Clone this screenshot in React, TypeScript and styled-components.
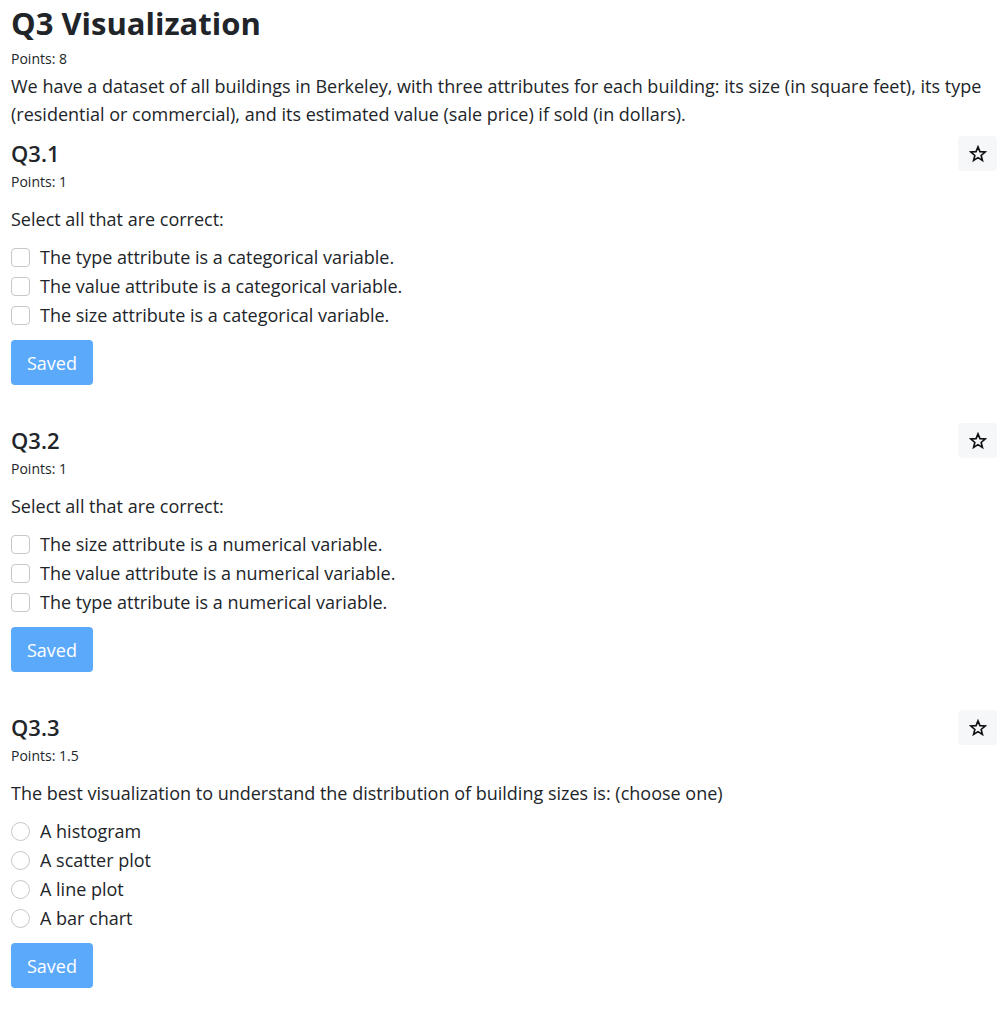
import styled, { createGlobalStyle } from 'styled-components'

const GlobalStyle = createGlobalStyle`
    body {
        margin: 0;
        background: #fff;
        color: #212529;
        font-family: "Segoe UI", "Open Sans", "Noto Sans", sans-serif;
    }
`

type Part = {
    id: string
    points: string
    prompt: string
    kind: 'checkbox' | 'radio'
    options: string[]
}

const PARTS: Part[] = [
    {
        id: 'Q3.1',
        points: '1',
        prompt: 'Select all that are correct:',
        kind: 'checkbox',
        options: [
            'The type attribute is a categorical variable.',
            'The value attribute is a categorical variable.',
            'The size attribute is a categorical variable.',
        ],
    },
    {
        id: 'Q3.2',
        points: '1',
        prompt: 'Select all that are correct:',
        kind: 'checkbox',
        options: [
            'The size attribute is a numerical variable.',
            'The value attribute is a numerical variable.',
            'The type attribute is a numerical variable.',
        ],
    },
    {
        id: 'Q3.3',
        points: '1.5',
        prompt: 'The best visualization to understand the distribution of building sizes is: (choose one)',
        kind: 'radio',
        options: ['A histogram', 'A scatter plot', 'A line plot', 'A bar chart'],
    },
]

const Page = styled.main`
    padding: 0 0 0 11px;
`

const Title = styled.h1`
    margin: 0;
    font-size: 31px;
    font-weight: 700;
    line-height: 46px;
`

const Points = styled.div<{ $offset?: number }>`
    margin-top: ${({ $offset }) => $offset ?? 0}px;
    font-size: 14px;
    line-height: 21px;
    color: #212529;
`

const Lead = styled.p`
    margin: 3px 0 0;
    font-size: 18px;
    line-height: 28px;
    padding-right: 8px;
`

const PartBlock = styled.section`
    margin-top: 11px;
    & + & {
        margin-top: 41px;
    }
`

const PartHead = styled.div`
    display: flex;
    justify-content: space-between;
    align-items: flex-start;
`

const PartTitle = styled.h2`
    margin: 0;
    font-size: 22px;
    font-weight: 600;
    line-height: 28px;
`

const StarButton = styled.button`
    width: 39px;
    height: 35px;
    margin-top: -3px;
    border: none;
    border-radius: 4px;
    background: #f6f7f9;
    display: flex;
    align-items: center;
    justify-content: center;
    padding: 0;
`

const Prompt = styled.p`
    margin: 13px 0 10px;
    font-size: 18px;
    line-height: 28px;
`

const Options = styled.div`
    display: flex;
    flex-direction: column;
`

const Option = styled.label`
    display: flex;
    align-items: center;
    gap: 10px;
    font-size: 18px;
    line-height: 29px;
`

const Box = styled.span<{ $round: boolean }>`
    width: 17px;
    height: 17px;
    border: 1px solid #c4c8cc;
    border-radius: ${({ $round }) => ($round ? '50%' : '4px')};
    background: #fff;
    flex: none;
`

const SavedButton = styled.button`
    margin-top: 10px;
    width: 82px;
    height: 45px;
    border: none;
    border-radius: 4px;
    background: #5aa9fb;
    color: #fff;
    font-family: inherit;
    font-size: 18px;
    padding: 0;
`

function Star() {
    return (
        <svg width="18" height="18" viewBox="0 0 24 24" fill="none" stroke="#111" strokeWidth="2.2" strokeLinejoin="miter">
            <path d="M12 2.5l2.6 6.4 6.9.5-5.3 4.5 1.7 6.7L12 16.9l-5.9 3.7 1.7-6.7-5.3-4.5 6.9-.5z" />
        </svg>
    )
}

export default function App() {
    return (
        <Page>
            <GlobalStyle />
            <Title>Q3 Visualization</Title>
            <Points $offset={2}>Points: 8</Points>
            <Lead>
                We have a dataset of all buildings in Berkeley, with three attributes for each building: its size (in
                square feet), its type (residential or commercial), and its estimated value (sale price) if sold (in
                dollars).
            </Lead>
            {PARTS.map((part) => (
                <PartBlock key={part.id}>
                    <PartHead>
                        <div>
                            <PartTitle>{part.id}</PartTitle>
                            <Points $offset={4}>Points: {part.points}</Points>
                        </div>
                        <StarButton aria-label="Bookmark">
                            <Star />
                        </StarButton>
                    </PartHead>
                    <Prompt>{part.prompt}</Prompt>
                    <Options>
                        {part.options.map((opt) => (
                            <Option key={opt}>
                                <Box $round={part.kind === 'radio'} />
                                {opt}
                            </Option>
                        ))}
                    </Options>
                    <SavedButton disabled>Saved</SavedButton>
                </PartBlock>
            ))}
        </Page>
    )
}
